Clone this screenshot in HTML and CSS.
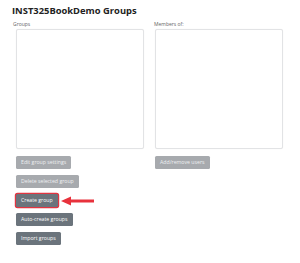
FILE: index.html
```html
<!DOCTYPE html>
<html>
<head>
<meta charset="utf-8">
<link rel="stylesheet" href="styles.css">
</head>
<body>
<div class="page">
  <h1 class="title">INST325BookDemo Groups</h1>
  <div class="cols">
    <div class="col col-left">
      <div class="label">Groups</div>
      <div class="listbox"></div>
      <div class="buttons">
        <button class="btn disabled">Edit group settings</button>
        <button class="btn disabled">Delete selected group</button>
        <div class="create-wrap">
          <button class="btn active highlight">Create group</button>
          <svg class="arrow" width="34" height="10" viewBox="0 0 34 10">
            <polygon points="0,5 10,0.5 10,3.6 33,3.6 33,6.4 10,6.4 10,9.5" fill="#e8323c"/>
          </svg>
        </div>
        <button class="btn active">Auto-create groups</button>
        <button class="btn active">Import groups</button>
      </div>
    </div>
    <div class="col col-right">
      <div class="label">Members of:</div>
      <div class="listbox"></div>
      <div class="buttons">
        <button class="btn disabled">Add/remove users</button>
      </div>
    </div>
  </div>
</div>
</body>
</html>
```
FILE: styles.css
```css
html, body {
  margin: 0;
  padding: 0;
  background: #ffffff;
}
.page {
  width: 300px;
  height: 263px;
  padding: 5px 0 0 12px;
  box-sizing: border-box;
  font-family: "Open Sans", "Liberation Sans", sans-serif;
  color: #212529;
}
.title {
  margin: 0;
  font-size: 9.4px;
  font-weight: 700;
  line-height: 11px;
  color: #222;
}
.cols {
  display: flex;
  margin-top: 3px;
}
.col {
  display: flex;
  flex-direction: column;
}
.col-left {
  width: 141px;
  padding-left: 1px;
}
.col-right {
  width: 130px;
}
.label {
  font-size: 5px;
  line-height: 11px;
  color: #666;
  height: 10px;
}
.listbox {
  width: 126px;
  height: 118px;
  border: 1px solid #e2e3e5;
  border-radius: 2px;
  background: #fff;
  box-shadow: 0 0 1px rgba(0,0,0,0.08);
}
.col-left .listbox,
.col-left .buttons {
  margin-left: 3px;
}
.col-right .listbox,
.col-right .buttons {
  margin-left: 1px;
}
.buttons {
  display: flex;
  flex-direction: column;
  align-items: flex-start;
  gap: 6px;
  margin-top: 7px;
}
.btn {
  font-family: "Open Sans", "Liberation Sans", sans-serif;
  font-size: 5.2px;
  line-height: 13px;
  height: 13px;
  padding: 0 5px;
  border: none;
  border-radius: 1.5px;
  color: #fff;
  margin: 0;
  white-space: nowrap;
}
.disabled {
  background: #a7aaae;
  color: #eef0f2;
}
.active {
  background: #6b747c;
}
.create-wrap {
  position: relative;
  display: flex;
}
.highlight {
  box-shadow: 0 0 0 1.2px #e23541;
}
.arrow {
  position: absolute;
  left: 45px;
  top: 1.5px;
}
```
